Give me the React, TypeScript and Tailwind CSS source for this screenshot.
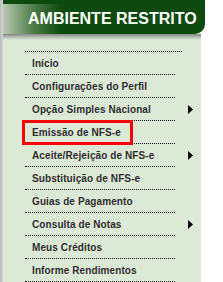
const items = [
  { label: "Início" },
  { label: "Configurações do Perfil" },
  { label: "Opção Simples Nacional", sub: true },
  { label: "Emissão de NFS-e", marked: true },
  { label: "Aceite/Rejeição de NFS-e", sub: true },
  { label: "Substituição de NFS-e" },
  { label: "Guias de Pagamento" },
  { label: "Consulta de Notas", sub: true },
  { label: "Meus Créditos" },
  { label: "Informe Rendimentos" },
];

function Arrow() {
  return (
    <svg width="5" height="9" viewBox="0 0 5 9" className="ml-[13px] shrink-0">
      <path d="M0 0 L5 4.5 L0 9 Z" fill="#000" />
    </svg>
  );
}

export default function App() {
  return (
    <div className="flex h-[282px] w-[223px] overflow-hidden bg-white font-['Liberation_Sans',Arial,sans-serif]">
      {/* faixa cinza da esquerda */}
      <div className="w-[3px] shrink-0 bg-[linear-gradient(to_right,#b9b9b9,#d4d4d4)]" />

      <div className="flex w-[202px] flex-col">
        {/* cabeçalho */}
        <div className="flex h-[36px] items-center rounded-br-[10px] border-t-4 border-[#0e4a0e] bg-[linear-gradient(to_right,#b8c9b0_0px,#4f7d4a_30px,#0e4a0e_58px)] pl-[25px]">
          <span className="text-[16px] font-bold leading-none text-white">AMBIENTE RESTRITO</span>
        </div>

        {/* painel */}
        <div className="w-[198px] flex-1 bg-[#dde9d7]">
          <div className="h-[6px] bg-[linear-gradient(to_bottom,#838783,#b4bdb1_50%,#dde9d7)]" />
          <div className="pl-[22px] pt-[11px]">
            <div className="h-0 w-[157px] border-t border-dotted border-[#111]" />
            {items.map((item) => (
              <div key={item.label} className="relative flex items-center">
                <div className="flex h-[23px] w-[150px] items-center border-b border-dotted border-[#111] pl-[7px] text-[10px] font-bold tracking-[0.1px] text-[#2f2f2f]">
                  {item.label}
                </div>
                {item.sub && <Arrow />}
                {item.marked && (
                  <div className="absolute left-[-3px] top-[-1px] h-[25px] w-[111px] border-[3px] border-[#ff0000]" />
                )}
              </div>
            ))}
          </div>
        </div>
      </div>
    </div>
  );
}
